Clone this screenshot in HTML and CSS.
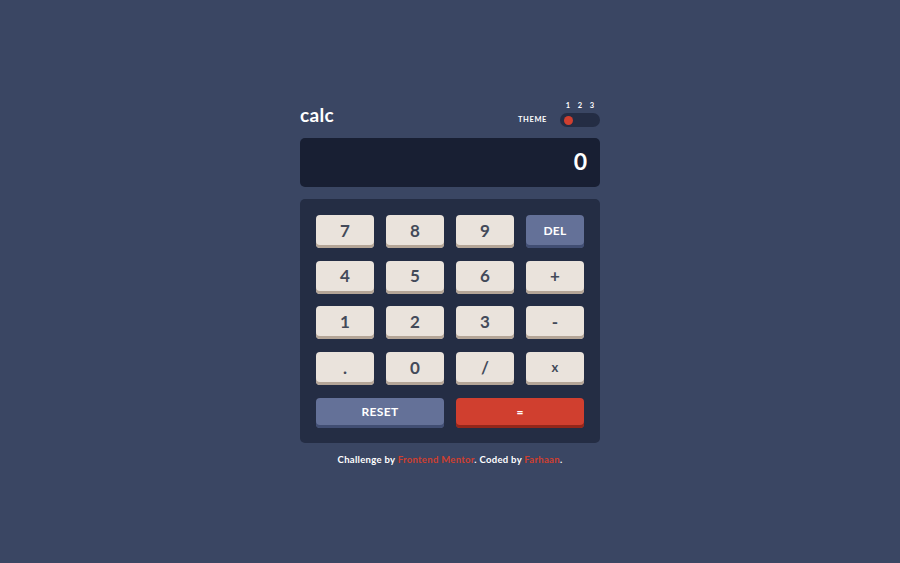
FILE: index.html
```html
<!DOCTYPE html>
<html lang="en">
<head>
    <meta charset="UTF-8">
    <meta name="viewport" content="width=device-width, initial-scale=1.0">
    <title>Calculator app</title>
    <link rel="stylesheet" href="styles.css">
</head>
<body>
    <main class="calculator">
        <header class="top">
            <h1 class="logo">calc</h1>
            <div class="theme">
                <span class="theme-label">THEME</span>
                <div class="switch">
                    <div class="switch-nums">
                        <span>1</span><span>2</span><span>3</span>
                    </div>
                    <div class="switch-track">
                        <span class="switch-knob"></span>
                    </div>
                </div>
            </div>
        </header>

        <div class="screen" id="screen">0</div>

        <div class="keypad">
            <button class="key">7</button>
            <button class="key">8</button>
            <button class="key">9</button>
            <button class="key key-blue">DEL</button>
            <button class="key">4</button>
            <button class="key">5</button>
            <button class="key">6</button>
            <button class="key">+</button>
            <button class="key">1</button>
            <button class="key">2</button>
            <button class="key">3</button>
            <button class="key">-</button>
            <button class="key">.</button>
            <button class="key">0</button>
            <button class="key">/</button>
            <button class="key key-small">x</button>
            <button class="key key-blue key-wide">RESET</button>
            <button class="key key-red key-wide">=</button>
        </div>

        <p class="attribution">
            Challenge by <a href="#">Frontend Mentor</a>. Coded by <a href="#">Farhaan</a>.
        </p>
    </main>
</body>
</html>
```

FILE: styles.css
```css
* {
    box-sizing: border-box;
}
body {
    margin: 0;
    background: #3a4663;
    font-family: "Lato", "DejaVu Sans", sans-serif;
    font-weight: 700;
    color: #ffffff;
}
.calculator {
    width: 300px;
    margin: 0 auto;
    padding-top: 101px;
}
.top {
    display: flex;
    justify-content: space-between;
    align-items: flex-end;
    height: 26px;
}
.logo {
    margin: 0;
    font-size: 19px;
    line-height: 20px;
    letter-spacing: 0.3px;
    padding-bottom: 2px;
}
.theme {
    display: flex;
    align-items: flex-end;
    gap: 13px;
}
.theme-label {
    font-size: 7.5px;
    letter-spacing: 0.6px;
    line-height: 10px;
    padding-bottom: 2px;
}
.switch {
    display: flex;
    flex-direction: column;
    width: 40px;
}
.switch-nums {
    display: flex;
    justify-content: space-around;
    padding: 0 2px;
    font-size: 7.5px;
    line-height: 9px;
    margin-bottom: 3px;
}
.switch-track {
    height: 14px;
    border-radius: 7px;
    background: #242d44;
    padding: 3px 4px;
}
.switch-knob {
    display: block;
    width: 9px;
    height: 9px;
    border-radius: 50%;
    background: #d03f2f;
    margin-top: -0.5px;
}
.screen {
    margin-top: 11px;
    height: 49px;
    border-radius: 5px;
    background: #181f33;
    text-align: right;
    font-size: 23px;
    line-height: 47px;
    padding-right: 13px;
}
.keypad {
    margin-top: 12px;
    background: #242d44;
    border-radius: 5px;
    padding: 16px 16px 15px;
    display: grid;
    grid-template-columns: repeat(4, 1fr);
    grid-template-rows: repeat(4, 33px) 30px;
    gap: 12.7px 12px;
}
.key {
    border: none;
    border-radius: 4px;
    background: #eae3dc;
    box-shadow: inset 0 -3px 0 #b4a597;
    color: #434a59;
    font-family: inherit;
    font-weight: 700;
    font-size: 17px;
    padding: 0 0 3px;
    cursor: pointer;
}
.key:hover {
    background: #fffffe;
}
.key-small {
    font-size: 13px;
}
.key-blue {
    background: #647198;
    box-shadow: inset 0 -3px 0 #414e73;
    color: #ffffff;
    font-size: 12px;
    letter-spacing: 0.3px;
}
.key-blue:hover {
    background: #a2b2e1;
}
.key-red {
    background: #d03f2f;
    box-shadow: inset 0 -3px 0 #93261a;
    color: #ffffff;
    font-size: 12px;
}
.key-red:hover {
    background: #f96b5b;
}
.key-wide {
    grid-column: span 2;
}
.attribution {
    margin: 11px 0 0;
    text-align: center;
    font-size: 9.5px;
    letter-spacing: 0.3px;
}
.attribution a {
    color: #d03f2f;
    text-decoration: none;
}
```
